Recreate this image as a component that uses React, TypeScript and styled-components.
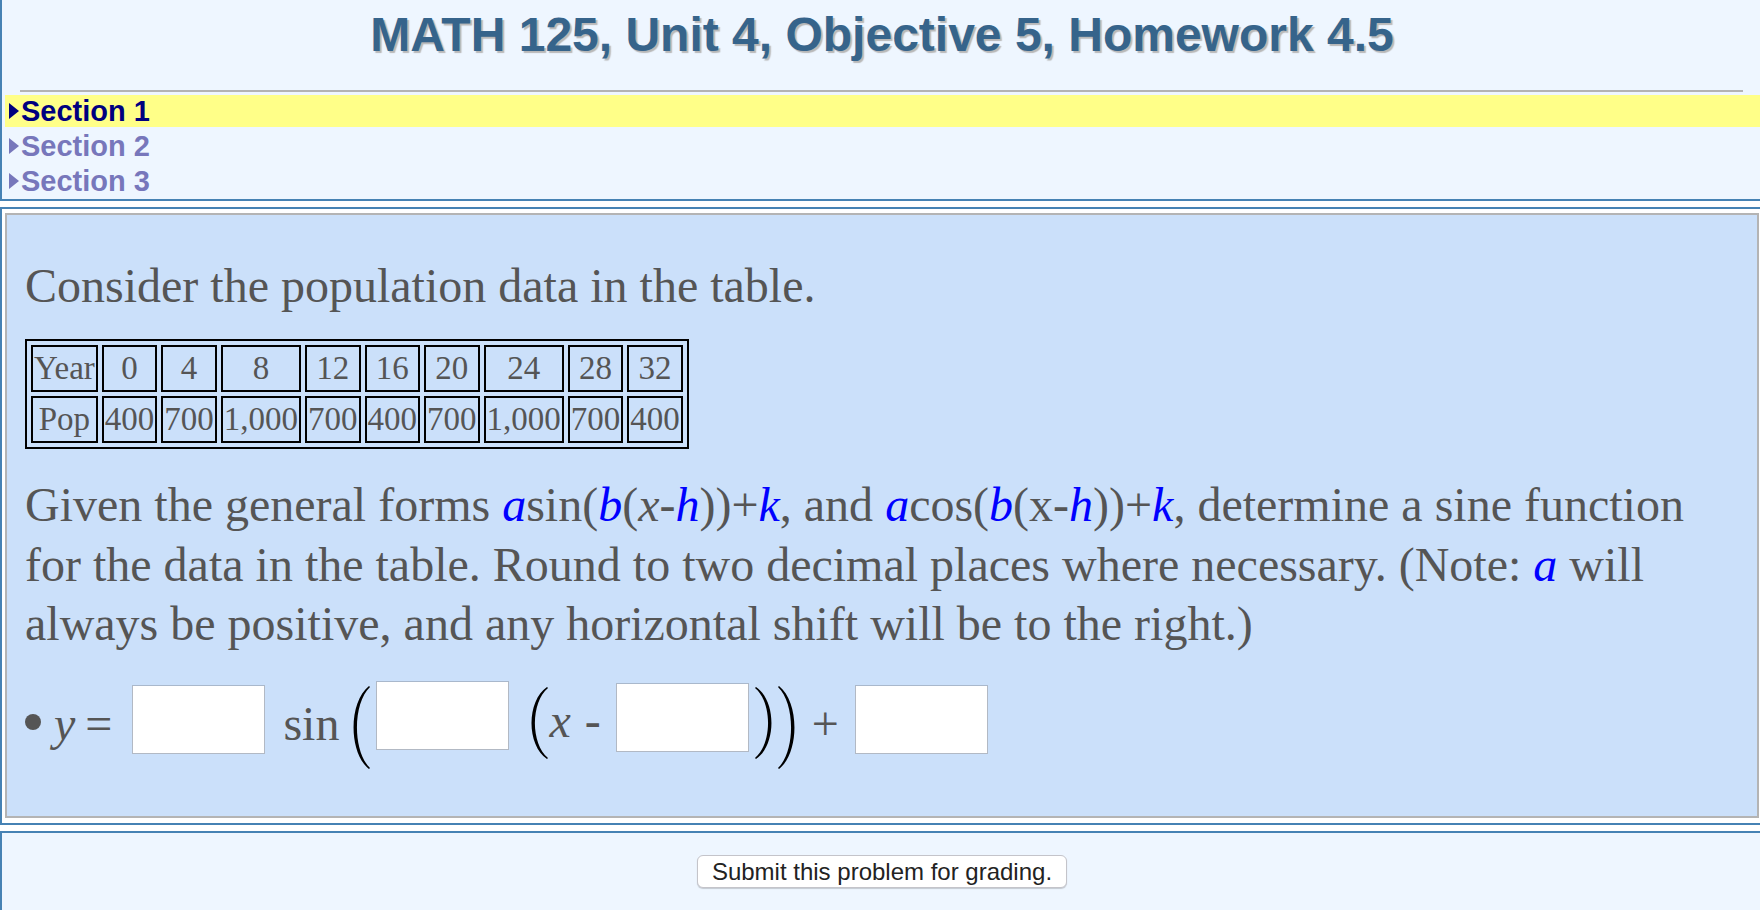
import React from "react";
import styled, { createGlobalStyle } from "styled-components";

const GlobalStyle = createGlobalStyle`
  html, body {
    margin: 0;
    padding: 0;
    background: #ffffff;
    overflow: hidden;
  }
  body {
    font-family: "Liberation Serif", "Times New Roman", serif;
  }
`;

const Page = styled.div`
  width: 1764px;
  display: flex;
  flex-direction: column;
  gap: 6px;
`;

const TopPanel = styled.div`
  background: #eef6ff;
  border: 2px solid #4682b4;
  border-top: none;
  padding: 7px 0 2px 0;
`;

const Title = styled.h1`
  margin: 0;
  font-family: "Liberation Sans", Arial, sans-serif;
  font-weight: bold;
  font-size: 48px;
  line-height: 55px;
  color: #36648b;
  text-align: center;
  text-shadow: 2px 2px 1px #b8b8b8;
`;

const Rule = styled.hr`
  margin: 28px 19px 3px 18px;
  border: 0;
  height: 2px;
  background: #b3b3b3;
`;

const SectionList = styled.ul`
  list-style: none;
  margin: 0 0 0 3px;
  padding: 0;
  display: flex;
  flex-direction: column;
  gap: 3px;
`;

const SectionItem = styled.li<{ $active?: boolean }>`
  display: flex;
  align-items: center;
  gap: 2px;
  height: 32px;
  padding-left: 4px;
  background: ${(p) => (p.$active ? "#ffff88" : "transparent")};
  color: ${(p) => (p.$active ? "#00007f" : "#7777bb")};
  font-family: "Liberation Sans", Arial, sans-serif;
  font-weight: bold;
  font-size: 29px;
  line-height: 32px;
  cursor: pointer;

  &::before {
    content: "";
    width: 0;
    height: 0;
    border-left: 10px solid currentColor;
    border-top: 8.5px solid transparent;
    border-bottom: 8.5px solid transparent;
  }
`;

const ProblemPanel = styled.div`
  background: #ffffff;
  border: 2px solid #4682b4;
  padding: 4px 3px 5px 3px;
`;

const ProblemBox = styled.div`
  background: #cbe0fa;
  border: 2px solid #b4b4b4;
  padding: 41px 18px 46px 18px;
  color: #555555;
  font-family: "Liberation Serif", "Times New Roman", serif;
  font-size: 48px;
  line-height: 59.5px;
`;

const Para = styled.p`
  margin: 0;
  width: 1712px;
`;

const DataTable = styled.table`
  margin-top: 23.5px;
  border: 2px solid #000000;
  border-spacing: 4px;
  font-size: 33px;
  line-height: 39px;
  color: #555555;
`;

const Cell = styled.td`
  border: 2px solid #000000;
  padding: 2px 1px;
  text-align: center;
`;

const Question = styled(Para)`
  margin-top: 26px;
`;

const Var = styled.i<{ $blue?: boolean }>`
  color: ${(p) => (p.$blue ? "#0000ff" : "inherit")};
`;

const EqRow = styled.div`
  display: flex;
  align-items: flex-start;
  height: 89px;
  margin-top: 27.5px;
  font-size: 48px;
  line-height: 48px;
  color: #555555;
`;

const Bullet = styled.span`
  flex-shrink: 0;
  width: 16px;
  height: 16px;
  border-radius: 50%;
  background: #555555;
  margin-top: 33px;
`;

const Sym = styled.span<{ $gap: number; $top: number; $italic?: boolean }>`
  margin-left: ${(p) => p.$gap}px;
  margin-top: ${(p) => p.$top}px;
  font-style: ${(p) => (p.$italic ? "italic" : "normal")};
  white-space: pre;
`;

const ParenSvg = styled.svg<{ $gap: number; $top: number; $flip?: boolean }>`
  flex-shrink: 0;
  display: block;
  overflow: visible;
  margin-left: ${(p) => p.$gap}px;
  margin-top: ${(p) => p.$top}px;
  transform: ${(p) => (p.$flip ? "scaleX(-1)" : "none")};
`;

const AnswerBox = styled.input<{ $gap: number; $top: number }>`
  flex-shrink: 0;
  box-sizing: border-box;
  width: 133px;
  height: 69px;
  margin: ${(p) => p.$top}px 0 0 ${(p) => p.$gap}px;
  padding: 0 6px;
  border: 1px solid #b2b9c4;
  border-top-color: #a9b8cc;
  background: #ffffff;
  font-size: 24px;
  outline: none;
`;

const Footer = styled.div`
  background: #eef6ff;
  border: 2px solid #4682b4;
  border-bottom: none;
  min-height: 55px;
  padding-top: 22px;
  display: flex;
  justify-content: center;
  align-items: flex-start;
`;

const SubmitButton = styled.button`
  height: 33px;
  padding: 0 14px;
  background: #ffffff;
  border: 1px solid #c4c4ca;
  border-radius: 6px;
  box-shadow: 0 1px 1px rgba(0, 0, 0, 0.18);
  color: #222222;
  font-family: "Liberation Sans", Arial, sans-serif;
  font-size: 24px;
  line-height: 1;
  cursor: pointer;
`;

// stretchy delimiter, drawn like a typeset "(" at a given height
const Paren = (props: { height: number; gap: number; top: number; flip?: boolean }) => {
  const { height, gap, top, flip } = props;
  const h = height;
  const d =
    `M17 1 C -3.6 ${h * 0.2}, -3.6 ${h * 0.8}, 17 ${h - 1} ` +
    `L 18 ${h - 2} C 0.6 ${h * 0.78}, 0.6 ${h * 0.22}, 18 2 Z`;
  return (
    <ParenSvg
      width={18}
      height={h}
      viewBox={`0 0 18 ${h}`}
      $gap={gap}
      $top={top}
      $flip={flip}
    >
      <path d={d} fill="#000000" />
    </ParenSvg>
  );
};

const years = ["0", "4", "8", "12", "16", "20", "24", "28", "32"];
const pops = ["400", "700", "1,000", "700", "400", "700", "1,000", "700", "400"];

const App = () => {
  return (
    <>
      <GlobalStyle />
      <Page>
        <TopPanel>
          <Title>MATH 125, Unit 4, Objective 5, Homework 4.5</Title>
          <Rule />
          <SectionList>
            <SectionItem $active>Section 1</SectionItem>
            <SectionItem>Section 2</SectionItem>
            <SectionItem>Section 3</SectionItem>
          </SectionList>
        </TopPanel>

        <ProblemPanel>
          <ProblemBox>
            <Para>Consider the population data in the table.</Para>
            <DataTable>
              <tbody>
                <tr>
                  <Cell>Year</Cell>
                  {years.map((y, i) => (
                    <Cell key={i}>{y}</Cell>
                  ))}
                </tr>
                <tr>
                  <Cell>Pop</Cell>
                  {pops.map((p, i) => (
                    <Cell key={i}>{p}</Cell>
                  ))}
                </tr>
              </tbody>
            </DataTable>
            <Question>
              Given the general forms <Var $blue>a</Var>sin(<Var $blue>b</Var>(
              <Var>x</Var>-<Var $blue>h</Var>))+<Var $blue>k</Var>, and{" "}
              <Var $blue>a</Var>cos(<Var $blue>b</Var>(x-<Var $blue>h</Var>))+
              <Var $blue>k</Var>, determine a sine function for the data in the
              table. Round to two decimal places where necessary. (Note:{" "}
              <Var $blue>a</Var> will always be positive, and any horizontal
              shift will be to the right.)
            </Question>
            <EqRow>
              <Bullet />
              <Sym $gap={13} $top={19} $italic>y</Sym>
              <Sym $gap={10} $top={19}>=</Sym>
              <AnswerBox $gap={20} $top={4} />
              <Sym $gap={18} $top={19}>sin</Sym>
              <Paren height={85} gap={13} top={4} />
              <AnswerBox $gap={6} $top={0} />
              <Paren height={74} gap={21} top={5} />
              <Sym $gap={1} $top={16} $italic>x</Sym>
              <Sym $gap={14} $top={16}>-</Sym>
              <AnswerBox $gap={15} $top={2} />
              <Paren height={74} gap={6} top={5} flip />
              <Paren height={85} gap={5} top={4} flip />
              <Sym $gap={16} $top={19}>+</Sym>
              <AnswerBox $gap={16} $top={4} />
            </EqRow>
          </ProblemBox>
        </ProblemPanel>

        <Footer>
          <SubmitButton>Submit this problem for grading.</SubmitButton>
        </Footer>
      </Page>
    </>
  );
};

export default App;
